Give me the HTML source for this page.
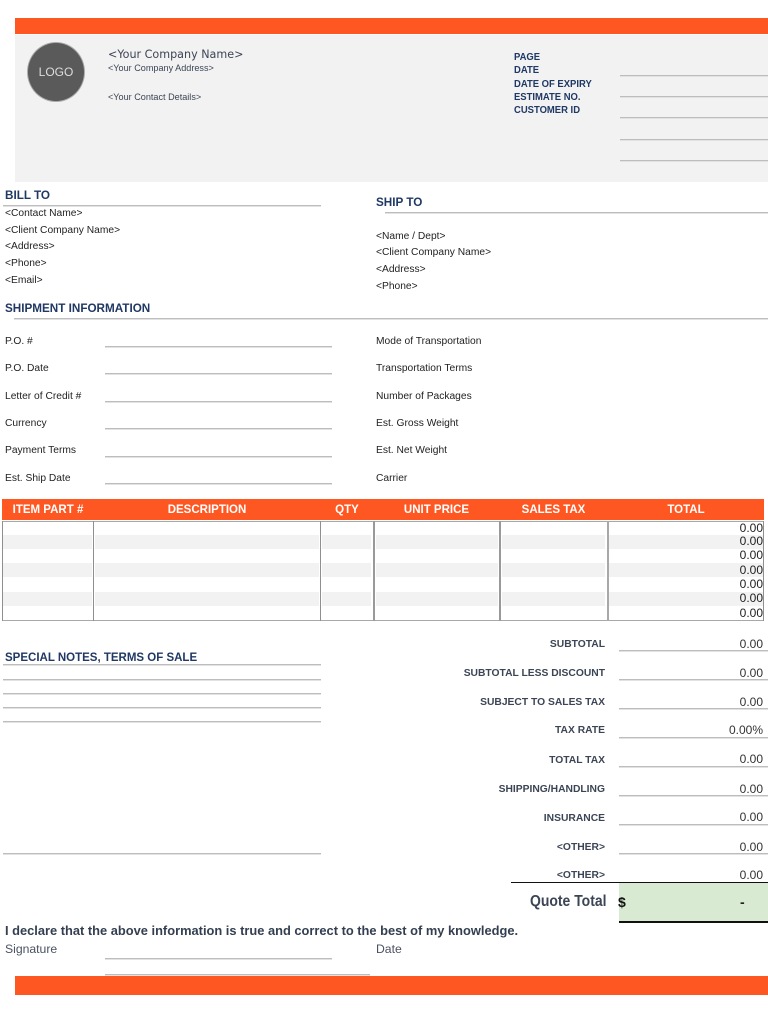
<!DOCTYPE html>
<html><head><meta charset="utf-8"><style>
html,body{margin:0;padding:0;background:#fff}
#p{position:relative;width:768px;height:1024px;overflow:hidden;font-family:"Liberation Sans",sans-serif;color:#222}
#p div{position:absolute}
.t{white-space:nowrap;line-height:14px;height:14px}
.h{font-weight:bold;font-size:11.7px;color:#1f3864}
.s{font-size:10.25px;color:#222}
.m{font-size:10.25px;color:#222}
.l{height:1px;background:#bdbdbd;border-bottom:1px solid #e2e2e2}
.c{font-family:"Liberation Sans",sans-serif;font-size:10.4px;font-weight:bold;color:#1f3864;transform:scaleX(.91);transform-origin:0 50%}
.y{font-size:9.1px;color:#3c4555}
.th{font-weight:bold;font-size:11.5px;color:#fff;text-align:center;top:503px}
.v{width:1px;background:#8f8f8f;top:521px;height:100px}
.n{font-size:12px;color:#222;text-align:right;right:5px}
.a{font-size:12px;color:#333;text-align:right;right:5px}
.r{font-size:10.3px;font-weight:bold;color:#3c4555;text-align:right;right:163px}
.g{background:#f2f2f2;height:14px}
</style></head><body><div id="p">
<div style="left:15px;top:18px;width:753px;height:16px;background:#ff5722"></div>
<div style="left:15px;top:35px;width:753px;height:147px;background:#f2f2f2"></div>
<div style="left:27px;top:42px;width:56px;height:58px;border-radius:50%;background:#5a5a5a;border:1px solid #aaa;color:#ddd;font-size:12px;line-height:58px;text-align:center">LOGO</div>
<div class="t" style="left:108px;top:48px;color:#3c4555;font-family:'DejaVu Sans',sans-serif;font-size:11.15px">&lt;Your Company Name&gt;</div>
<div class="t y" style="left:108px;top:61px">&lt;Your Company Address&gt;</div>
<div class="t y" style="left:108px;top:90px">&lt;Your Contact Details&gt;</div>
<div class="t c" style="left:514px;top:51px">PAGE</div>
<div class="t c" style="left:514px;top:64px">DATE</div>
<div class="t c" style="left:514px;top:78px">DATE OF EXPIRY</div>
<div class="t c" style="left:514px;top:91px">ESTIMATE NO.</div>
<div class="t c" style="left:514px;top:104px">CUSTOMER ID</div>
<div class="l" style="left:620px;top:75px;width:148px"></div>
<div class="l" style="left:620px;top:96px;width:148px"></div>
<div class="l" style="left:620px;top:117px;width:148px"></div>
<div class="l" style="left:620px;top:139px;width:148px"></div>
<div class="l" style="left:620px;top:160px;width:148px"></div>

<div class="t h" style="left:5px;top:189px">BILL TO</div>
<div class="l" style="left:3px;top:205px;width:318px"></div>
<div class="t s" style="left:5px;top:207px">&lt;Contact Name&gt;</div>
<div class="t s" style="left:5px;top:224px">&lt;Client Company Name&gt;</div>
<div class="t s" style="left:5px;top:240px">&lt;Address&gt;</div>
<div class="t s" style="left:5px;top:257px">&lt;Phone&gt;</div>
<div class="t s" style="left:5px;top:274px">&lt;Email&gt;</div>

<div class="t h" style="left:376px;top:196px">SHIP TO</div>
<div class="l" style="left:385px;top:212px;width:383px"></div>
<div class="t s" style="left:376px;top:230px">&lt;Name / Dept&gt;</div>
<div class="t s" style="left:376px;top:246px">&lt;Client Company Name&gt;</div>
<div class="t s" style="left:376px;top:263px">&lt;Address&gt;</div>
<div class="t s" style="left:376px;top:280px">&lt;Phone&gt;</div>

<div class="t h" style="left:5px;top:302px">SHIPMENT INFORMATION</div>
<div class="l" style="left:14px;top:318px;width:754px"></div>
<div class="t m" style="left:5px;top:335px">P.O. #</div>
<div class="t m" style="left:5px;top:362px">P.O. Date</div>
<div class="t m" style="left:5px;top:390px">Letter of Credit #</div>
<div class="t m" style="left:5px;top:417px">Currency</div>
<div class="t m" style="left:5px;top:444px">Payment Terms</div>
<div class="t m" style="left:5px;top:472px">Est. Ship Date</div>
<div class="l" style="left:105px;top:346px;width:227px"></div>
<div class="l" style="left:105px;top:373px;width:227px"></div>
<div class="l" style="left:105px;top:401px;width:227px"></div>
<div class="l" style="left:105px;top:428px;width:227px"></div>
<div class="l" style="left:105px;top:456px;width:227px"></div>
<div class="l" style="left:105px;top:483px;width:227px"></div>
<div class="t m" style="left:376px;top:335px">Mode of Transportation</div>
<div class="t m" style="left:376px;top:362px">Transportation Terms</div>
<div class="t m" style="left:376px;top:390px">Number of Packages</div>
<div class="t m" style="left:376px;top:417px">Est. Gross Weight</div>
<div class="t m" style="left:376px;top:444px">Est. Net Weight</div>
<div class="t m" style="left:376px;top:472px">Carrier</div>

<div style="left:2px;top:499px;width:762px;height:21px;background:#ff5722"></div>
<div class="t th" style="left:2px;width:92px">ITEM PART #</div>
<div class="t th" style="left:94px;width:226px">DESCRIPTION</div>
<div class="t th" style="left:321px;width:52px">QTY</div>
<div class="t th" style="left:374px;width:125px">UNIT PRICE</div>
<div class="t th" style="left:500px;width:107px">SALES TAX</div>
<div class="t th" style="left:608px;width:156px">TOTAL</div>

<div class="g" style="left:3px;top:535px;width:89px"></div><div class="g" style="left:95px;top:535px;width:224px"></div><div class="g" style="left:322px;top:535px;width:49px"></div><div class="g" style="left:376px;top:535px;width:122px"></div><div class="g" style="left:502px;top:535px;width:103px"></div><div class="g" style="left:609px;top:535px;width:154px"></div>
<div class="g" style="left:3px;top:563px;width:89px"></div><div class="g" style="left:95px;top:563px;width:224px"></div><div class="g" style="left:322px;top:563px;width:49px"></div><div class="g" style="left:376px;top:563px;width:122px"></div><div class="g" style="left:502px;top:563px;width:103px"></div><div class="g" style="left:609px;top:563px;width:154px"></div>
<div class="g" style="left:3px;top:592px;width:89px"></div><div class="g" style="left:95px;top:592px;width:224px"></div><div class="g" style="left:322px;top:592px;width:49px"></div><div class="g" style="left:376px;top:592px;width:122px"></div><div class="g" style="left:502px;top:592px;width:103px"></div><div class="g" style="left:609px;top:592px;width:154px"></div>

<div style="left:2px;top:521px;width:762px;height:1px;background:#a8a8a8"></div>
<div style="left:2px;top:620px;width:762px;height:1px;background:#a8a8a8"></div>
<div class="v" style="left:2px"></div><div class="v" style="left:93px"></div><div class="v" style="left:320px"></div><div class="v" style="left:373px;width:2px;background:#999"></div><div class="v" style="left:499px;width:2px;background:#999"></div><div class="v" style="left:607px;width:2px;background:#a8a8a8"></div><div class="v" style="left:763px"></div>
<div class="t n" style="top:521px">0.00</div>
<div class="t n" style="top:534px">0.00</div>
<div class="t n" style="top:548px">0.00</div>
<div class="t n" style="top:563px">0.00</div>
<div class="t n" style="top:577px">0.00</div>
<div class="t n" style="top:591px">0.00</div>
<div class="t n" style="top:606px">0.00</div>

<div class="t h" style="left:5px;top:651px;font-size:11.5px">SPECIAL NOTES, TERMS OF SALE</div>
<div class="l" style="left:3px;top:664px;width:318px"></div>
<div class="l" style="left:3px;top:679px;width:318px"></div>
<div class="l" style="left:3px;top:693px;width:318px"></div>
<div class="l" style="left:3px;top:707px;width:318px"></div>
<div class="l" style="left:3px;top:721px;width:318px"></div>
<div class="l" style="left:3px;top:853px;width:318px"></div>

<div class="t r" style="top:638px">SUBTOTAL</div>
<div class="t r" style="top:667px">SUBTOTAL LESS DISCOUNT</div>
<div class="t r" style="top:696px">SUBJECT TO SALES TAX</div>
<div class="t r" style="top:724px">TAX RATE</div>
<div class="t r" style="top:754px">TOTAL TAX</div>
<div class="t r" style="top:783px">SHIPPING/HANDLING</div>
<div class="t r" style="top:812px">INSURANCE</div>
<div class="t r" style="top:841px">&lt;OTHER&gt;</div>
<div class="t r" style="top:869px">&lt;OTHER&gt;</div>
<div class="t a" style="top:637px">0.00</div>
<div class="t a" style="top:666px">0.00</div>
<div class="t a" style="top:695px">0.00</div>
<div class="t a" style="top:723px">0.00%</div>
<div class="t a" style="top:752px">0.00</div>
<div class="t a" style="top:782px">0.00</div>
<div class="t a" style="top:810px">0.00</div>
<div class="t a" style="top:840px">0.00</div>
<div class="t a" style="top:868px">0.00</div>
<div class="l" style="left:619px;top:650px;width:149px"></div>
<div class="l" style="left:619px;top:679px;width:149px"></div>
<div class="l" style="left:619px;top:708px;width:149px"></div>
<div class="l" style="left:619px;top:737px;width:149px"></div>
<div class="l" style="left:619px;top:766px;width:149px"></div>
<div class="l" style="left:619px;top:795px;width:149px"></div>
<div class="l" style="left:619px;top:824px;width:149px"></div>
<div class="l" style="left:619px;top:853px;width:149px"></div>
<div style="left:619px;top:883px;width:149px;height:38px;background:#d9ead3"></div>
<div style="left:511px;top:882px;width:257px;height:1px;background:#111"></div>
<div style="left:619px;top:921px;width:149px;height:2px;background:#111"></div>
<div class="t" style="left:530px;top:895px;font-size:15.6px;font-weight:bold;color:#3c4555;transform:scaleX(.895);transform-origin:0 50%">Quote Total</div>
<div class="t" style="left:618px;top:895px;font-size:14px;font-weight:bold;color:#111">$</div>
<div class="t" style="left:740px;top:895px;font-size:14px;font-weight:bold;color:#222">-</div>

<div class="t" style="left:5px;top:924px;font-size:12.87px;font-weight:bold;color:#333f50">I declare that the above information is true and correct to the best of my knowledge.</div>
<div class="t" style="left:5px;top:942px;font-size:12.2px;color:#4a5261">Signature</div>
<div class="t" style="left:376px;top:942px;font-size:12.2px;color:#4a5261">Date</div>
<div class="l" style="left:105px;top:958px;width:227px"></div>
<div class="l" style="left:105px;top:974px;width:265px"></div>
<div style="left:15px;top:976px;width:753px;height:19px;background:#ff5722"></div>
</div></body></html>
